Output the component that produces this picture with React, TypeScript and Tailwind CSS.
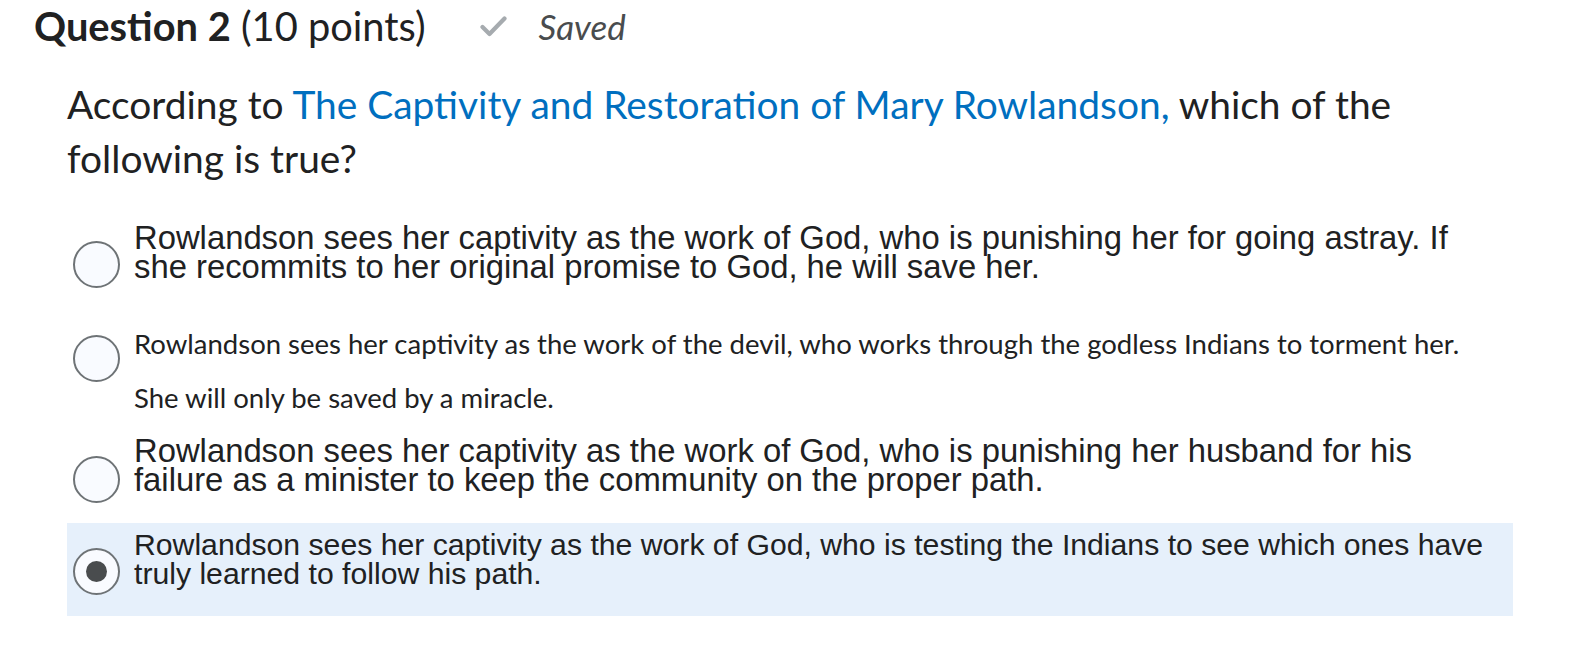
import React from 'react'

type Option = {
    id: string
    lines: string[]
    lato?: boolean
    selected?: boolean
    size: string
    radioTop: string
    rowClass: string
}

const options: Option[] = [
    {
        id: 'a',
        size: 'text-[32.8px]',
        radioTop: 'mt-[18px]',
        rowClass: 'mt-0',
        lines: [
            'Rowlandson sees her captivity as the work of God, who is punishing her for going astray. If',
            'she recommits to her original promise to God, he will save her.',
        ],
    },
    {
        id: 'b',
        lato: true,
        size: 'text-[27.5px]',
        radioTop: 'mt-[18px]',
        rowClass: 'mt-[29px]',
        lines: [
            'Rowlandson sees her captivity as the work of the devil, who works through the godless Indians to torment her.',
            'She will only be saved by a miracle.',
        ],
    },
    {
        id: 'c',
        size: 'text-[32.8px]',
        radioTop: 'mt-[20px]',
        rowClass: 'mt-[11px]',
        lines: [
            'Rowlandson sees her captivity as the work of God, who is punishing her husband for his',
            'failure as a minister to keep the community on the proper path.',
        ],
    },
    {
        id: 'd',
        selected: true,
        size: 'text-[30.2px]',
        radioTop: 'mt-[18px]',
        rowClass: 'mt-[20px] bg-[#e6f0fb] pt-[7px] pb-[21px]',
        lines: [
            'Rowlandson sees her captivity as the work of God, who is testing the Indians to see which ones have',
            'truly learned to follow his path.',
        ],
    },
]

function Radio({ checked }: { checked?: boolean }) {
    return (
        <span className="flex h-[47px] w-[47px] shrink-0 items-center justify-center rounded-full border-2 border-[#6e7376] bg-[#f9fbff]">
            {checked && <span className="h-[21px] w-[21px] rounded-full bg-[#494c4e]" />}
        </span>
    )
}

export default function App() {
    return (
        <div className="min-h-[652px] bg-white pl-[34px] text-[#202122]" style={{ fontFamily: 'Lato, "Noto Sans", sans-serif' }}>
            <div className="flex items-center">
                <h2 className="whitespace-nowrap text-[39.8px] leading-[42px]">
                    <span className="font-bold">Question 2</span> (10 points)
                </h2>
                <svg className="ml-[54px] h-[21px] w-[27px]" viewBox="0 0 27 21" fill="none">
                    <path d="M2.5 11 L9.5 18 L24.5 2.5" stroke="#a6abaf" strokeWidth="4.2" strokeLinecap="round" strokeLinejoin="round" />
                </svg>
                <span className="ml-[32px] text-[35px] italic text-[#494c4e]">Saved</span>
            </div>

            <div className="ml-[33px] w-[1446px]">
                <p className="mt-[24px] whitespace-nowrap text-[38.9px] leading-[54px]">
                    According to <span className="text-[#006fbf]">The Captivity and Restoration of Mary Rowlandson,</span> which of the
                    <br />
                    following is true?
                </p>

                <div className="mt-[38px] flex flex-col">
                    {options.map((o) => (
                        <div key={o.id} className={`flex items-start pl-[6px] ${o.rowClass}`}>
                            <div className={o.radioTop}>
                                <Radio checked={o.selected} />
                            </div>
                            {o.lato ? (
                                <p className={`ml-[14px] whitespace-nowrap leading-[54px] ${o.size}`}>
                                    {o.lines[0]}
                                    <br />
                                    {o.lines[1]}
                                </p>
                            ) : (
                                <p
                                    className={`ml-[14px] whitespace-nowrap leading-[29px] ${o.size}`}
                                    style={{ fontFamily: '"Liberation Sans", Arial, sans-serif' }}
                                >
                                    {o.lines[0]}
                                    <br />
                                    {o.lines[1]}
                                </p>
                            )}
                        </div>
                    ))}
                </div>
            </div>
        </div>
    )
}
